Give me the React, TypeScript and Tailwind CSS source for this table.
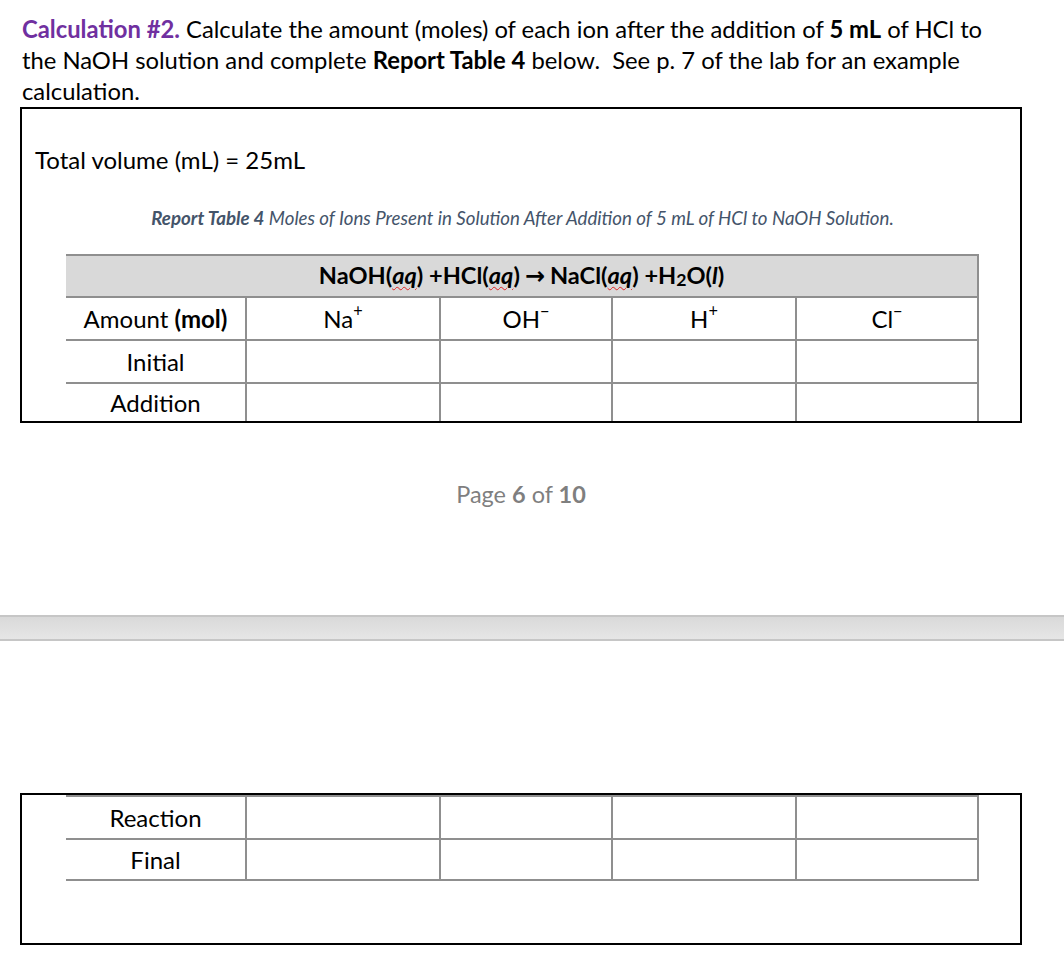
import React from "react";

const cols = "grid grid-cols-[181px_194px_172px_184px_182px]";

function Aq() {
  return (
    <span className="italic underline decoration-wavy decoration-[#e02020] decoration-1 underline-offset-2">aq</span>
  );
}

function Sup({ children }: { children: React.ReactNode }) {
  return <span className="relative -top-[0.45em] text-[0.68em] leading-none">{children}</span>;
}

function EmptyRow({ label, h, last }: { label: string; h: string; last?: boolean }) {
  return (
    <div className={`${cols} ${last ? "" : "border-b-2"} border-[#8f8f8f]`}>
      <div className={`${h} border-r-2 border-[#8f8f8f] flex items-center justify-center`}>{label}</div>
      <div className={`${h} border-r-2 border-[#8f8f8f]`} />
      <div className={`${h} border-r-2 border-[#8f8f8f]`} />
      <div className={`${h} border-r-2 border-[#8f8f8f]`} />
      <div className={`${h} border-r-2 border-[#8f8f8f]`} />
    </div>
  );
}

export default function App() {
  return (
    <div className="w-[1064px] h-[968px] bg-white text-black [font-family:Lato,'Liberation_Sans',sans-serif] overflow-hidden">
      {/* Title */}
      <div className="pl-[22px] pt-[14px] text-[23.8px] leading-[31px] whitespace-pre">
        <div>
          <span className="font-bold text-[#7030a0]">Calculation #2.</span> Calculate the amount (moles) of each ion after the addition of <b>5 mL</b> of HCl to
        </div>
        <div>
          the NaOH solution and complete <b>Report Table 4</b> below.  See p. 7 of the lab for an example
        </div>
        <div>calculation.</div>
      </div>

      {/* Box 1 */}
      <div className="ml-[20px] w-[1002px] h-[316px] border-2 border-black overflow-hidden">
        <div className="mt-[35px] pl-[13px] text-[24px] leading-[31px]">Total volume (mL) = 25mL</div>
        <div className="ml-[44px] w-[913px]">
          <div className="mt-[31px] text-center text-[18.7px] leading-[24px] italic text-[#44546a] whitespace-nowrap">
            <b>Report Table 4</b> Moles of Ions Present in Solution After Addition of 5 mL of HCl to NaOH Solution.
          </div>
          <div className="mt-[24px] text-[24px]">
            <div className="h-[44px] border-2 border-l-0 border-[#8f8f8f] bg-[#d9d9d9] flex items-center justify-center font-bold text-[23.6px] whitespace-nowrap">
              NaOH(<Aq />) +HCl(<Aq />) <span className="mx-[5px] [font-family:'DejaVu_Sans',sans-serif] font-bold text-[24px] leading-none">→</span> NaCl(<Aq />) +H<sub>2</sub>O(<span className="italic">l</span>)
            </div>
            <div className={`${cols} border-b-2 border-[#8f8f8f]`}>
              <div className="h-[41px] border-r-2 border-[#8f8f8f] flex items-center justify-center">
                Amount&nbsp;<b>(mol)</b>
              </div>
              <div className="h-[41px] border-r-2 border-[#8f8f8f] flex items-center justify-center">
                Na<Sup>+</Sup>
              </div>
              <div className="h-[41px] border-r-2 border-[#8f8f8f] flex items-center justify-center">
                OH<Sup>−</Sup>
              </div>
              <div className="h-[41px] border-r-2 border-[#8f8f8f] flex items-center justify-center">
                H<Sup>+</Sup>
              </div>
              <div className="h-[41px] border-r-2 border-[#8f8f8f] flex items-center justify-center">
                Cl<Sup>−</Sup>
              </div>
            </div>
            <EmptyRow label="Initial" h="h-[41px]" />
            <EmptyRow label="Addition" h="h-[37px]" last />
          </div>
        </div>
      </div>

      {/* Footer of page 6 */}
      <div className="h-[192px] pt-[56px] ml-[20px] w-[1002px] text-center text-[23.5px] leading-[30px] text-[#7f7f7f]">
        Page <b>6</b> of <b>10</b>
      </div>

      {/* Page gap */}
      <div className="h-[26px] border-y-2 border-[#c6c6c6] bg-gradient-to-b from-[#d9d9d9] to-[#e6e6e6]" />

      <div className="h-[152px]" />

      {/* Box 2 */}
      <div className="ml-[20px] w-[1002px] h-[152px] border-2 border-black overflow-hidden text-[24px]">
        <div className="ml-[44px] w-[913px] border-t-2 border-[#8f8f8f]">
          <EmptyRow label="Reaction" h="h-[41px]" />
          <EmptyRow label="Final" h="h-[39px]" />
        </div>
      </div>
    </div>
  );
}
